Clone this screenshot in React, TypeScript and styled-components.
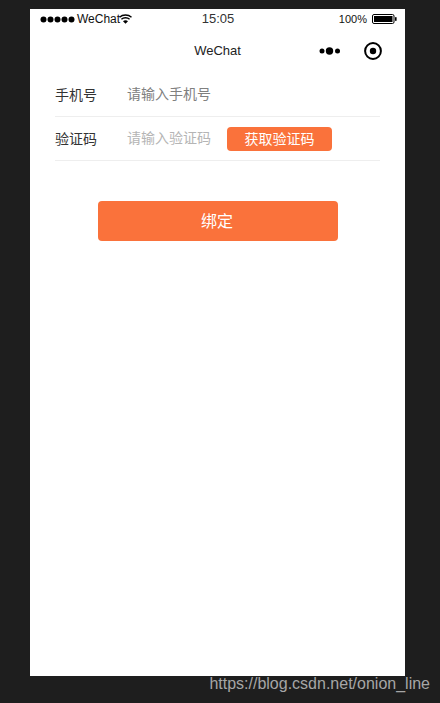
import React from "react";
import styled, { createGlobalStyle } from "styled-components";

const Global = createGlobalStyle`
  html, body { margin: 0; padding: 0; background: #1e1e1e; }
  body { width: 440px; height: 703px; overflow: hidden; font-family: "Liberation Sans", "Noto Sans CJK SC", sans-serif; }
`;
const Stage = styled.div`
  position: relative;
  width: 440px;
  height: 703px;
  padding: 9px 35px 27px 30px;
  box-sizing: border-box;
  background: #1e1e1e;
`;
const Phone = styled.main`
  width: 375px;
  height: 667px;
  background: #fff;
  display: flex;
  flex-direction: column;
`;
const StatusBar = styled.div`
  height: 20px;
  display: grid;
  grid-template-columns: 1fr auto 1fr;
  align-items: center;
  padding: 0 8px 0 10px;
  font-size: 12px;
  color: #111;
`;
const StatusLeft = styled.div`
  display: flex;
  align-items: center;
  gap: 2px;
`;
const Clock = styled.span`
  font-size: 13px;
  color: #333;
  padding: 0 1px 2px 0;
`;
const StatusRight = styled.div`
  display: flex;
  align-items: center;
  justify-content: flex-end;
  gap: 5px;
  font-size: 11px;
`;
const NavBar = styled.header`
  position: relative;
  height: 44px;
  box-sizing: border-box;
  padding-bottom: 2px;
  display: flex;
  align-items: center;
  justify-content: center;
  font-size: 13px;
  color: #222;
`;
const NavActions = styled.div`
  position: absolute;
  right: 23px;
  top: 13px;
  display: flex;
  align-items: center;
  gap: 23px;
`;
const Form = styled.section`
  margin: 0 25px;
  width: 325px;
`;
const Row = styled.div`
  height: 44px;
  box-sizing: border-box;
  border-bottom: 1px solid #eeeeee;
  display: flex;
  align-items: center;
  font-family: "Noto Sans CJK SC", sans-serif;
  font-size: 14px;
`;
const Label = styled.span`
  width: 72px;
  color: #333;
  line-height: 18px;
  padding-bottom: 2px;
`;
const Hint = styled.span<{ $light?: boolean }>`
  width: 100px;
  color: ${(p) => (p.$light ? "#b5b5b5" : "#808080")};
  line-height: 18px;
  padding-bottom: 4px;
`;
const CodeButton = styled.button`
  width: 105px;
  height: 24px;
  padding: 0 0 2px;
  border: 0;
  border-radius: 4px;
  background: #fa723b;
  color: #fff;
  font-family: "Noto Sans CJK SC", sans-serif;
  font-size: 14px;
  line-height: 22px;
`;
const SubmitButton = styled.button`
  display: block;
  width: 240px;
  height: 40px;
  margin: 40px 0 0 68px;
  padding: 0 2px 2px 0;
  border: 0;
  border-radius: 4px;
  background: #fa723b;
  color: #fff;
  font-family: "Noto Sans CJK SC", sans-serif;
  font-size: 16px;
`;
const Watermark = styled.span`
  position: absolute;
  right: 10px;
  top: 674px;
  font-family: "Liberation Sans", sans-serif;
  font-size: 16px;
  line-height: 20px;
  color: #a6a6a6;
`;

const Signal = () => (
  <svg width="35" height="7" viewBox="0 0 35 7" aria-hidden>
    {[3.5, 10.5, 17.5, 24.5, 31.5].map((x) => (
      <circle key={x} cx={x} cy="3.5" r="3" fill="#000" />
    ))}
  </svg>
);
const Wifi = () => (
  <svg width="13" height="10" viewBox="0 0 13 10" aria-hidden style={{ marginLeft: -3 }}>
    <path d="M.5 3.2C3.8.2 9.2.2 12.5 3.2M2.4 5.2C4.6 3.2 8.4 3.2 10.6 5.2" fill="none" stroke="#000" strokeWidth="1.4" />
    <path d="M4 7.2c1.4-1.2 3.6-1.2 5 0L6.5 9.8z" fill="#000" />
  </svg>
);
const Battery = () => (
  <svg width="25" height="10" viewBox="0 0 25 10" aria-hidden>
    <rect x=".5" y=".5" width="21.5" height="9" rx="1.5" fill="none" stroke="#000" />
    <rect x="2" y="2" width="18.5" height="6" fill="#000" />
    <rect x="23" y="3.2" width="1.6" height="3.6" fill="#000" />
  </svg>
);
const Dots = () => (
  <svg width="22" height="8" viewBox="0 0 22 8" aria-hidden>
    <circle cx="3" cy="4" r="2.5" fill="#000" />
    <circle cx="10.5" cy="4" r="3.7" fill="#000" />
    <circle cx="18.5" cy="4" r="2.5" fill="#000" />
  </svg>
);
const Record = () => (
  <svg width="18" height="18" viewBox="0 0 18 18" aria-hidden>
    <circle cx="9" cy="9" r="7.9" fill="none" stroke="#000" strokeWidth="2" />
    <circle cx="9" cy="9" r="3.2" fill="#000" />
  </svg>
);

export default function App() {
  return (
    <Stage>
      <Global />
      <Phone>
        <StatusBar>
          <StatusLeft>
            <Signal />
            <span>WeChat</span>
            <Wifi />
          </StatusLeft>
          <Clock>15:05</Clock>
          <StatusRight>
            <span>100%</span>
            <Battery />
          </StatusRight>
        </StatusBar>
        <NavBar>
          WeChat
          <NavActions>
            <Dots />
            <Record />
          </NavActions>
        </NavBar>
        <Form>
          <Row>
            <Label>手机号</Label>
            <Hint>请输入手机号</Hint>
          </Row>
          <Row>
            <Label>验证码</Label>
            <Hint $light>请输入验证码</Hint>
            <CodeButton>获取验证码</CodeButton>
          </Row>
        </Form>
        <SubmitButton>绑定</SubmitButton>
      </Phone>
      <Watermark>https://blog.csdn.net/onion_line</Watermark>
    </Stage>
  );
}
